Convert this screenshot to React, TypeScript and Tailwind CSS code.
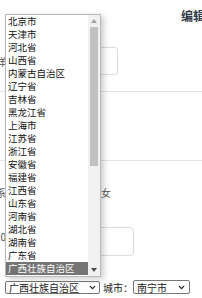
import { ChevronDown } from "lucide-react";

const provinces = [
  "北京市", "天津市", "河北省", "山西省", "内蒙古自治区", "辽宁省", "吉林省",
  "黑龙江省", "上海市", "江苏省", "浙江省", "安徽省", "福建省", "江西省",
  "山东省", "河南省", "湖北省", "湖南省", "广东省", "广西壮族自治区",
];

const font = { fontFamily: '"Noto Sans CJK SC", "Noto Sans", sans-serif' };

// only the tail end of each label peeks out from under the open list
const Label = ({ text }: { text: string }) => (
  <div className="w-[6px] shrink-0 overflow-hidden flex justify-end whitespace-nowrap text-[10px] leading-[13px] text-[#555]">
    {text}
  </div>
);

export default function App() {
  return (
    <div className="relative w-[202px] h-[298px] overflow-hidden bg-white" style={font}>
      <div className="h-[32px] flex items-center pl-[181px] whitespace-nowrap">
        <h1 className="text-[12px] font-bold text-[#2f3a48]">编辑资料</h1>
      </div>

      <div className="mt-[15px] flex items-center">
        <Label text="昵称详" />
        <div className="ml-[14px] w-[98px] h-[28px] border border-[#dcdcdc] rounded-[3px]" />
      </div>

      <div className="mt-[16px] h-px bg-[#e3e3e3]" />
      <div className="h-[68px] pt-[2px] flex items-start">
        <div className="w-[3px] overflow-hidden flex justify-end whitespace-nowrap text-[10px] leading-[13px] text-[#555]">
          简介：
        </div>
      </div>
      <div className="h-px bg-[#e3e3e3]" />

      <div className="mt-[25px] flex items-center">
        <Label text="联系" />
        <span className="ml-[95px] text-[10px] leading-[13px] text-[#555]">女</span>
      </div>

      <div className="mt-[28px] flex items-start">
        <div className="mt-[3px]">
          <Label text="(20" />
        </div>
        <div className="ml-[14px] w-[114px] h-[29px] border border-[#dcdcdc] rounded-[4px]" />
      </div>

      <div className="mt-[24px] flex items-center text-[10px] leading-[13px] text-[#222]">
        <div className="w-[5px] overflow-hidden flex justify-end whitespace-nowrap">省份：</div>
        <div className="w-[95px] h-[13px] border border-[#767676] rounded-[2px] flex items-center justify-between pl-[3px] pr-[2px]">
          <span className="whitespace-nowrap">广西壮族自治区</span>
          <ChevronDown size={9} strokeWidth={3.5} />
        </div>
        <span className="ml-[3px] whitespace-nowrap">城市：</span>
        <div className="w-[57px] h-[14px] border border-[#767676] rounded-[2px] flex items-center justify-between pl-[3px] pr-[3px]">
          <span className="whitespace-nowrap">南宁市</span>
          <ChevronDown size={9} strokeWidth={3.5} />
        </div>
      </div>

      {/* open native-style dropdown list */}
      <div className="absolute left-[5px] top-[14px] w-[96px] h-[263px] bg-white border border-[#b9b9b9] shadow-[3px_2px_6px_rgba(0,0,0,0.2)] flex">
        <ul className="flex-1 flex flex-col text-[9.5px] leading-[13px] text-[#111]">
          {provinces.map((p, i) => (
            <li
              key={p}
              className={
                i === provinces.length - 1
                  ? "h-[13px] pl-[2px] whitespace-nowrap bg-[#747474] text-white"
                  : "h-[13px] pl-[2px] whitespace-nowrap"
              }
            >
              {p}
            </li>
          ))}
        </ul>
        <div className="w-[12px] bg-[#f1f1f1] flex flex-col">
          <div className="h-[12px] flex items-center justify-center">
            <svg width="6" height="4" viewBox="0 0 6 4">
              <polygon points="3,0 6,4 0,4" fill="#a3a3a3" />
            </svg>
          </div>
          <div className="mx-[2px] h-[139px] bg-[#c1c1c1]" />
          <div className="flex-1" />
          <div className="h-[12px] flex items-center justify-center">
            <svg width="6" height="4" viewBox="0 0 6 4">
              <polygon points="0,0 6,0 3,4" fill="#505050" />
            </svg>
          </div>
        </div>
      </div>
    </div>
  );
}
